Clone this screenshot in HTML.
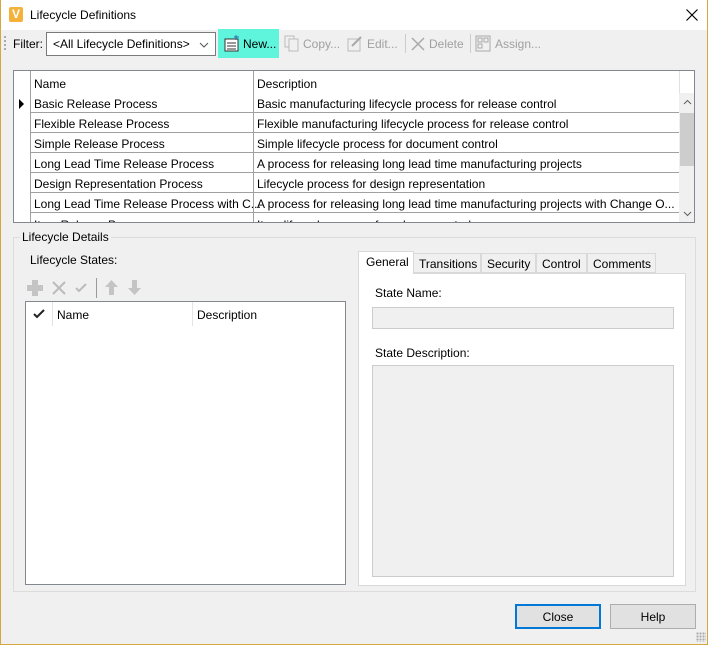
<!DOCTYPE html>
<html><head><meta charset="utf-8"><style>
*{box-sizing:border-box;margin:0;padding:0}
body{width:708px;height:645px;overflow:hidden;background:#f0f0f0;font-family:"Liberation Sans",sans-serif;font-size:12px;color:#000;position:relative}
.a{position:absolute}
.win{left:0;top:0;width:708px;height:645px;border:1px solid #d3a93f;border-top:none}
.title{left:1px;top:0;width:706px;height:30px;background:#fff}
.grid{left:13px;top:70px;width:682px;height:153px;background:#fff;border:1px solid #828790;overflow:hidden}
.row{position:absolute;left:17px;width:648px;height:20px;border-bottom:1px solid #a0a0a0}
.row span{position:absolute;top:4px;white-space:nowrap}
.c1{left:3px}.c2{left:226px}
.vl{position:absolute;top:0;width:1px;background:#a0a0a0}
.tab{position:absolute;top:253px;height:20px;border:1px solid #d9d9d9;background:#f0f0f0;padding:3px 0 0 5px}
.dis{color:#a0a0a0}
</style></head><body>
<div class="a win"></div>
<div class="a title"></div>
<div class="a" style="left:9px;top:7px;width:14px;height:15px;background:#f4b23a;border-radius:2px;color:#fff;font-weight:bold;font-size:12px;text-align:center;line-height:15px">V</div>
<div class="a" style="left:30px;top:8px;font-size:12px">Lifecycle Definitions</div>
<svg class="a" style="left:686px;top:9px" width="12" height="12"><path d="M0.5 0.5L11.5 11.5M11.5 0.5L0.5 11.5" stroke="#000" stroke-width="1.2"/></svg>

<div class="a" style="left:4px;top:36px;width:2px;height:14px;border-left:2px dotted #aaa"></div>
<div class="a" style="left:13px;top:37px">Filter:</div>
<div class="a" style="left:46px;top:32px;width:170px;height:24px;background:#fff;border:1px solid #7a7a7a"><span class="a" style="left:6px;top:4px">&lt;All Lifecycle Definitions&gt;</span><svg class="a" style="left:152px;top:9px" width="10" height="6"><path d="M1 1l4 4 4-4" stroke="#555" fill="none"/></svg></div>
<div class="a" style="left:218px;top:29px;width:61px;height:29px;background:#5ff5dc"></div>
<svg class="a" style="left:223px;top:35px" width="18" height="18"><rect x="2" y="4" width="13" height="12" fill="#fff" stroke="#333"/><line x1="4" y1="8" x2="13" y2="8" stroke="#333"/><line x1="4" y1="11" x2="13" y2="11" stroke="#333"/><line x1="4" y1="14" x2="13" y2="14" stroke="#333"/><path d="M13 0v5M11 2h5" stroke="#2a6ab0"/></svg>
<div class="a" style="left:243px;top:37px">New...</div>
<svg class="a" style="left:284px;top:35px" width="16" height="17"><rect x="1" y="1" width="9" height="11" fill="#f0f0f0" stroke="#bbb"/><rect x="5" y="4" width="9" height="12" fill="#f0f0f0" stroke="#bbb"/></svg>
<div class="a dis" style="left:303px;top:37px">Copy...</div>
<svg class="a" style="left:347px;top:35px" width="16" height="17"><rect x="1" y="4" width="12" height="12" fill="#f0f0f0" stroke="#bbb"/><path d="M5 11L14 2" stroke="#aaa" stroke-width="2"/></svg>
<div class="a dis" style="left:367px;top:37px">Edit...</div>
<div class="a" style="left:405px;top:34px;width:1px;height:19px;background:#ccc"></div>
<svg class="a" style="left:411px;top:37px" width="14" height="14"><path d="M1 1L13 13M13 1L1 13" stroke="#aaa" stroke-width="1.5"/></svg>
<div class="a dis" style="left:429px;top:37px">Delete</div>
<div class="a" style="left:470px;top:34px;width:1px;height:19px;background:#ccc"></div>
<svg class="a" style="left:475px;top:35px" width="16" height="17"><rect x="1" y="1" width="14" height="15" fill="#f0f0f0" stroke="#aaa"/><rect x="3" y="3" width="4" height="4" fill="none" stroke="#aaa"/><rect x="9" y="3" width="4" height="4" fill="none" stroke="#aaa"/><rect x="3" y="9" width="4" height="4" fill="none" stroke="#aaa"/></svg>
<div class="a dis" style="left:495px;top:37px">Assign...</div>

<div class="a grid">
 <div class="row" style="top:0;height:22px;border-bottom:none"><span class="c1" style="top:6px">Name</span><span class="c2" style="top:6px">Description</span></div>
 <div class="a" style="left:5px;top:28px;width:0;height:0;border-left:5px solid #000;border-top:5px solid transparent;border-bottom:5px solid transparent"></div>
 <div class="row" style="top:22px"><span class="c1">Basic Release Process</span><span class="c2">Basic manufacturing lifecycle process for release control</span></div>
 <div class="row" style="top:42px"><span class="c1">Flexible Release Process</span><span class="c2">Flexible manufacturing lifecycle process for release control</span></div>
 <div class="row" style="top:62px"><span class="c1">Simple Release Process</span><span class="c2">Simple lifecycle process for document control</span></div>
 <div class="row" style="top:82px"><span class="c1">Long Lead Time Release Process</span><span class="c2">A process for releasing long lead time manufacturing projects</span></div>
 <div class="row" style="top:102px"><span class="c1">Design Representation Process</span><span class="c2">Lifecycle process for design representation</span></div>
 <div class="row" style="top:122px"><span class="c1">Long Lead Time Release Process with C...</span><span class="c2">A process for releasing long lead time manufacturing projects with Change O...</span></div>
 <div class="row" style="top:143px;border:none"><span class="c1">Item Release Process</span><span class="c2">Item lifecycle process for release control</span></div>
 <div class="vl" style="left:16px;top:0;height:153px"></div>
 <div class="vl" style="left:239px;top:0;height:153px"></div>
 <div class="a" style="left:665px;top:0;width:1px;height:22px;background:#e0e0e0"></div>
 <div class="a" style="left:665px;top:22px;width:17px;height:131px;background:#f0f0f0"></div>
 <div class="a" style="left:666px;top:42px;width:15px;height:53px;background:#cdcdcd"></div>
 <svg class="a" style="left:669px;top:28px" width="9" height="6"><path d="M1 5l3.5-3.5L8 5" stroke="#606060" fill="none"/></svg>
 <svg class="a" style="left:669px;top:140px" width="9" height="6"><path d="M1 1l3.5 3.5L8 1" stroke="#606060" fill="none"/></svg>
</div>

<div class="a" style="left:13px;top:237px;width:683px;height:355px;border:1px solid #dcdcdc"></div>
<div class="a" style="left:20px;top:230px;background:#f0f0f0;padding:0 2px">Lifecycle Details</div>
<div class="a" style="left:30px;top:253px">Lifecycle States:</div>
<svg class="a" style="left:27px;top:280px" width="16" height="16"><path d="M5 0h6v5h5v6h-5v5h-6v-5h-5v-6h5z" fill="#c4c4c4"/></svg>
<svg class="a" style="left:52px;top:281px" width="14" height="14"><path d="M1 1L13 13M13 1L1 13" stroke="#bbb" stroke-width="2"/></svg>
<svg class="a" style="left:75px;top:283px" width="12" height="10"><path d="M1 5l3 3 7-7" stroke="#bbb" stroke-width="2" fill="none"/></svg>
<div class="a" style="left:96px;top:278px;width:1px;height:20px;background:#999"></div>
<svg class="a" style="left:105px;top:280px" width="13" height="15"><path d="M6.5 0L13 7H9v8H4V7H0z" fill="#c4c4c4"/></svg>
<svg class="a" style="left:128px;top:280px" width="13" height="15"><path d="M6.5 15L13 8H9V0H4v8H0z" fill="#c4c4c4"/></svg>

<div class="a" style="left:25px;top:301px;width:321px;height:284px;background:#fff;border:1px solid #828790">
 <svg class="a" style="left:7px;top:7px" width="12" height="10"><path d="M1 5l3 3 7-7" stroke="#222" stroke-width="2" fill="none"/></svg>
 <div class="a" style="left:26px;top:0;width:1px;height:24px;background:#e5e5e5"></div>
 <div class="a" style="left:31px;top:6px">Name</div>
 <div class="a" style="left:166px;top:0;width:1px;height:24px;background:#e5e5e5"></div>
 <div class="a" style="left:171px;top:6px">Description</div>
</div>

<div class="a" style="left:358px;top:273px;width:328px;height:313px;background:#fff;border:1px solid #d9d9d9"></div>
<div class="tab" style="left:413px;width:68px">Transitions</div>
<div class="tab" style="left:481px;width:55px">Security</div>
<div class="tab" style="left:536px;width:51px">Control</div>
<div class="tab" style="left:587px;width:69px">Comments</div>
<div class="a" style="left:358px;top:251px;width:56px;height:23px;background:#fff;border:1px solid #d9d9d9;border-bottom:none;padding:3px 0 0 7px">General</div>
<div class="a" style="left:375px;top:286px">State Name:</div>
<div class="a" style="left:372px;top:307px;width:302px;height:22px;background:#f0f0f0;border:1px solid #ccc"></div>
<div class="a" style="left:375px;top:346px">State Description:</div>
<div class="a" style="left:372px;top:365px;width:302px;height:212px;background:#f0f0f0;border:1px solid #ccc"></div>

<div class="a" style="left:515px;top:604px;width:86px;height:25px;background:#e1e1e1;border:2px solid #0078d7;text-align:center;padding-top:4px">Close</div>
<div class="a" style="left:610px;top:604px;width:86px;height:25px;background:#e1e1e1;border:1px solid #adadad;text-align:center;padding-top:5px">Help</div>
<div class="a" style="left:696px;top:632px;width:10px;height:10px;background:radial-gradient(circle,#aaa 1px,transparent 1.2px) 0 0/3px 3px"></div>
</body></html>
